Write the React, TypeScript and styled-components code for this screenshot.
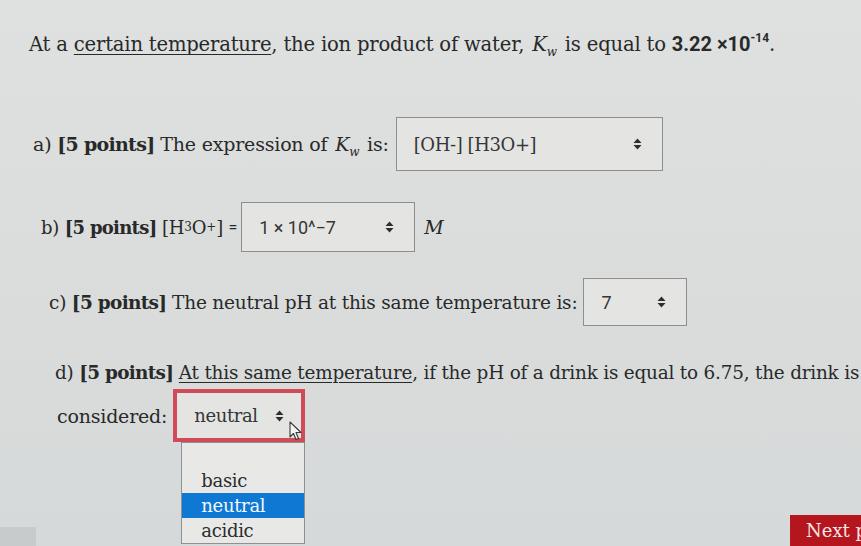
import React from "react";
import styled, { createGlobalStyle } from "styled-components";

const GlobalStyle = createGlobalStyle`
  html, body { margin: 0; padding: 0; }
  body {
    background: #dadddc;
    font-family: "DejaVu Serif", "Liberation Serif", serif;
    color: #282929;
    width: 861px;
    height: 546px;
    overflow: hidden;
  }
`;

const Page = styled.div`
  position: relative;
  height: 546px;
  display: flex;
  flex-direction: column;
  background: linear-gradient(180deg, #dfe1e0 0%, #d9dcdb 60%, #d6d9d9 100%);
`;

const Line = styled.div<{ $indent: number; $top: number; $height?: number; $size: number }>`
  display: flex;
  align-items: center;
  padding-left: ${(p) => p.$indent}px;
  margin-top: ${(p) => p.$top}px;
  height: ${(p) => p.$height ?? 30}px;
  font-size: ${(p) => p.$size}px;
  white-space: nowrap;
  letter-spacing: -0.2px;
`;

const Under = styled.span`
  text-decoration: underline;
  text-decoration-thickness: 1px;
  text-underline-offset: 3px;
`;

const Bold = styled.b`
  font-weight: 700;
  letter-spacing: -0.7px;
`;

const SansBold = styled.span`
  font-family: Roboto, "Liberation Sans", sans-serif;
  font-weight: 700;
  font-size: 20px;
  letter-spacing: 0;
  margin-left: 6px;
`;

const Sup = styled.sup`
  font-size: 12px;
  vertical-align: 9px;
  line-height: 0;
`;

const Sub = styled.sub`
  font-size: 12px;
  vertical-align: -5px;
  line-height: 0;
`;

const Var = styled.i`
  font-style: italic;
  margin: 0 2px;
`;

const SansSmall = styled.span`
  font-family: Roboto, "Liberation Sans", sans-serif;
  font-size: 16px;
`;

const Select = styled.div<{ $w: number; $h: number; $sans?: boolean; $focus?: boolean; $gap?: number }>`
  position: relative;
  box-sizing: border-box;
  width: ${(p) => p.$w}px;
  height: ${(p) => p.$h}px;
  display: flex;
  align-items: center;
  justify-content: space-between;
  padding: 0 ${(p) => (p.$focus ? 17 : 20)}px 0 17px;
  margin-left: ${(p) => p.$gap ?? 6}px;
  background: #e4e5e3;
  border: ${(p) => (p.$focus ? "4px solid #d04a58" : "1px solid #8d8f8e")};
  font-family: ${(p) => (p.$sans ? "Roboto, 'Liberation Sans', sans-serif" : "'DejaVu Serif', serif")};
  font-size: 18px;
  color: #353636;
  letter-spacing: ${(p) => (p.$sans ? 0 : -0.4)}px;
`;

const Arrows = () => (
  <svg width="9" height="12" viewBox="0 0 9 12">
    <path d="M4.5 0.5 L8.5 5 H0.5 Z" fill="#2d2e2e" />
    <path d="M0.5 7 H8.5 L4.5 11.5 Z" fill="#2d2e2e" />
  </svg>
);

const Unit = styled.i`
  font-style: italic;
  margin-left: 9px;
  font-size: 19px;
`;

const List = styled.div`
  position: absolute;
  left: 4px;
  top: 49px;
  width: 124px;
  box-sizing: border-box;
  border: 1px solid #8f9190;
  background: #e8e9e7;
  display: flex;
  flex-direction: column;
  z-index: 5;
`;

const Option = styled.div<{ $active?: boolean }>`
  height: 25px;
  display: flex;
  align-items: center;
  padding-left: 19px;
  font-family: "DejaVu Serif", serif;
  font-size: 18px;
  letter-spacing: -0.3px;
  color: ${(p) => (p.$active ? "#f4f8fc" : "#2c2d2d")};
  background: ${(p) => (p.$active ? "#0f78d3" : "transparent")};
`;

const Cursor = styled.svg`
  position: absolute;
  left: 112px;
  top: 28px;
  z-index: 6;
`;

const Footer = styled.div`
  margin-top: auto;
  display: flex;
  align-items: flex-end;
  justify-content: space-between;
  height: 32px;
`;

const ChromeBlock = styled.div`
  width: 36px;
  height: 19px;
  background: #c8cbcb;
`;

const NextButton = styled.div`
  width: 71px;
  height: 31px;
  background: #b5161d;
  color: #f2e8e8;
  font-family: "DejaVu Serif", serif;
  font-size: 18px;
  display: flex;
  align-items: center;
  padding-left: 16px;
  box-sizing: border-box;
  overflow: hidden;
  white-space: nowrap;
`;

export default function App() {
  return (
    <>
      <GlobalStyle />
      <Page>
        <Line $indent={29} $top={29} $size={19.6}>
          At a&nbsp;<Under>certain temperature</Under>, the ion product of water,&nbsp;
          <Var>K<Sub>w</Sub></Var>
          &nbsp;is equal to
          <SansBold>
            3.22 ×10<Sup>-14</Sup>
          </SansBold>
          .
        </Line>

        <Line $indent={33} $top={58} $height={54} $size={19}>
          a)&nbsp;<Bold>[5 points]</Bold>&nbsp;The expression of&nbsp;
          <Var>K<Sub>w</Sub></Var>
          &nbsp;is:
          <Select $w={267} $h={54} $gap={7}>
            <span>[OH-] [H3O+]</span>
            <Arrows />
          </Select>
        </Line>

        <Line $indent={41} $top={31} $height={50} $size={18}>
          b)&nbsp;<Bold>[5 points]</Bold>&nbsp;[H<Sub>3</Sub>O<Sup>+</Sup>]&nbsp;<SansSmall>=</SansSmall>
          <Select $w={174} $h={50} $sans $gap={4}>
            <span>1 × 10^−7</span>
            <Arrows />
          </Select>
          <Unit>M</Unit>
        </Line>

        <Line $indent={49} $top={26} $height={48} $size={18.5}>
          c)&nbsp;<Bold>[5 points]</Bold>&nbsp;The neutral pH at this same temperature is:
          <Select $w={104} $h={48} $sans>
            <span>7</span>
            <Arrows />
          </Select>
        </Line>

        <Line $indent={55} $top={31} $size={18.4}>
          d)&nbsp;<Bold>[5 points]</Bold>&nbsp;<Under>At this same temperature</Under>, if the pH of a drink is equal to 6.75, the drink is
        </Line>

        <Line $indent={57} $top={2} $height={53} $size={19}>
          considered:
          <Select $w={132} $h={53} $focus>
            <span>neutral</span>
            <Arrows />
            <Cursor width="16" height="20" viewBox="0 0 16 20">
              <path d="M1 1 L1 16 L4.5 12.5 L7 18.5 L9.5 17.5 L7 11.5 L12 11.5 Z" fill="#f4f4f4" stroke="#3a3a3a" strokeWidth="1.1" strokeLinejoin="round" />
            </Cursor>
            <List>
              <Option />
              <Option>basic</Option>
              <Option $active>neutral</Option>
              <Option>acidic</Option>
            </List>
          </Select>
        </Line>

        <Footer>
          <ChromeBlock />
          <NextButton>Next p</NextButton>
        </Footer>
      </Page>
    </>
  );
}
